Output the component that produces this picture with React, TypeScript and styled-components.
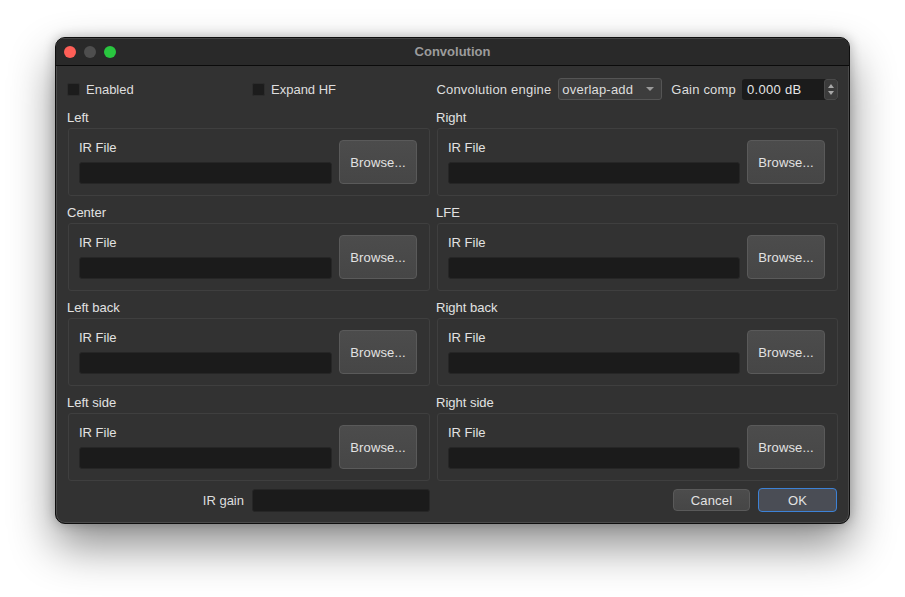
import React from "react";
import styled, { createGlobalStyle } from "styled-components";

const GlobalStyle = createGlobalStyle`
  html, body {
    margin: 0;
    padding: 0;
    background: #ffffff;
  }
  body {
    font-family: "Liberation Sans", Arial, sans-serif;
    font-size: 13px;
  }
`;

const channels = [
  ["Left", "Right"],
  ["Center", "LFE"],
  ["Left back", "Right back"],
  ["Left side", "Right side"],
];

const Stage = styled.div`
  width: 905px;
  height: 597px;
  box-sizing: border-box;
  padding: 37px 0 0 55px;
  overflow: hidden;
  background: #ffffff;
`;

const Window = styled.div`
  width: 795px;
  box-sizing: border-box;
  border: 1px solid #0e0e0e;
  border-radius: 10px;
  background: #323232;
  overflow: hidden;
  box-shadow: inset 0 0 0 1px rgba(255, 255, 255, 0.12),
    0 22px 45px rgba(0, 0, 0, 0.45), 0 0 12px rgba(0, 0, 0, 0.25);
  display: flex;
  flex-direction: column;
  color: #dedede;
`;

const TitleBar = styled.div`
  height: 27px;
  border-bottom: 1px solid #0b0b0b;
  background: #292929;
  display: grid;
  grid-template-columns: 1fr auto 1fr;
  align-items: center;
  box-shadow: inset 0 1px 0 rgba(255, 255, 255, 0.12);
`;

const Lights = styled.div`
  display: flex;
  gap: 8px;
  padding-left: 8px;
`;

const Light = styled.span<{ $c: string }>`
  width: 12px;
  height: 12px;
  border-radius: 50%;
  background: ${(p) => p.$c};
`;

const Title = styled.div`
  font-weight: bold;
  font-size: 13px;
  color: #9c9c9c;
`;

const Body = styled.div`
  padding: 12px 11px 11px 12px;
  display: flex;
  flex-direction: column;
`;

const Header = styled.div`
  height: 22px;
  display: flex;
  align-items: center;
  justify-content: space-between;
  margin-left: -1px;
`;

const CheckGroup = styled.div`
  display: flex;
  align-items: center;
`;

const CheckItem = styled.label<{ $w?: number }>`
  ${(p) => (p.$w ? `width: ${p.$w}px;` : "")}
  display: flex;
  align-items: center;
  gap: 6px;
  color: #dedede;
`;

const CheckBox = styled.span`
  width: 13px;
  height: 13px;
  box-sizing: border-box;
  border-radius: 2px;
  background: #1c1c1c;
  border: 1px solid #2c2c2c;
`;

const Controls = styled.div`
  display: flex;
  align-items: center;
`;

const Label = styled.span<{ $gap?: number; $spacing?: number }>`
  margin-right: ${(p) => p.$gap ?? 6}px;
  white-space: nowrap;
  color: #dedede;
  letter-spacing: ${(p) => p.$spacing ?? 0}px;
`;

const Combo = styled.div`
  width: 104px;
  height: 22px;
  box-sizing: border-box;
  border: 1px solid #555555;
  border-radius: 3px;
  background: #3d3d3d;
  display: flex;
  align-items: center;
  justify-content: space-between;
  padding: 0 7px 0 3px;
  margin-right: 9px;
  color: #dedede;
  letter-spacing: 0.2px;
`;

const Arrow = styled.span`
  width: 0;
  height: 0;
  border-left: 4px solid transparent;
  border-right: 4px solid transparent;
  border-top: 4px solid #9a9a9a;
`;

const Spin = styled.div`
  width: 96px;
  height: 21px;
  box-sizing: border-box;
  border-radius: 3px;
  background: #1b1b1b;
  display: flex;
  align-items: stretch;
  overflow: hidden;
`;

const SpinText = styled.span`
  flex: 1;
  padding-left: 5px;
  display: flex;
  align-items: center;
  color: #e6e6e6;
  letter-spacing: 0.3px;
`;

const Stepper = styled.div`
  width: 14px;
  background: #3b3b3b;
  border: 1px solid #4a4a4a;
  border-radius: 3px;
  box-sizing: border-box;
  display: flex;
  flex-direction: column;
  align-items: center;
  justify-content: center;
  gap: 3px;
`;

const Tri = styled.span<{ $up?: boolean }>`
  width: 0;
  height: 0;
  border-left: 3.5px solid transparent;
  border-right: 3.5px solid transparent;
  ${(p) =>
    p.$up ? "border-bottom: 4px solid #a8a8a8;" : "border-top: 4px solid #a8a8a8;"}
`;

const Sections = styled.div`
  margin-top: 9px;
  display: grid;
  grid-template-columns: 362px 401px;
  column-gap: 7px;
  row-gap: 8px;
`;

const Section = styled.div`
  display: flex;
  flex-direction: column;
`;

const SectionLabel = styled.div`
  height: 16px;
  line-height: 16px;
  margin-top: 1px;
  margin-bottom: 2px;
  margin-left: -1px;
  color: #e2e2e2;
`;

const GroupBox = styled.div`
  height: 68px;
  box-sizing: border-box;
  border: 1px solid #3f3f3f;
  border-radius: 3px;
  padding: 11px 12px 11px 10px;
  display: flex;
  gap: 7px;
`;

const FileCol = styled.div`
  flex: 1;
  display: flex;
  flex-direction: column;
  justify-content: space-between;
`;

const FileLabel = styled.div`
  line-height: 16px;
  color: #e2e2e2;
`;

const Field = styled.div<{ $w?: number; $h?: number }>`
  height: ${(p) => p.$h ?? 22}px;
  ${(p) => (p.$w ? `width: ${p.$w}px;` : "")}
  box-sizing: border-box;
  border-radius: 3px;
  background: #1b1b1b;
  border: 1px solid #262626;
`;

const Button = styled.button<{ $w: number; $h: number; $default?: boolean }>`
  width: ${(p) => p.$w}px;
  height: ${(p) => p.$h}px;
  box-sizing: border-box;
  border-radius: 4px;
  border: 1px solid ${(p) => (p.$default ? "#3d82d6" : "#5a5a5a")};
  background: ${(p) =>
    p.$default ? "#4a4d55" : "linear-gradient(#4c4c4c, #464646)"};
  color: #e2e2e2;
  font-family: "Liberation Sans", Arial, sans-serif;
  font-size: 13px;
  letter-spacing: 0.15px;
  padding: 0;
`;

const Footer = styled.div`
  margin-top: 7px;
  display: grid;
  grid-template-columns: 362px 401px;
  column-gap: 7px;
  height: 24px;
`;

const FooterLeft = styled.div`
  display: flex;
  align-items: center;
  justify-content: flex-end;
`;

const FooterRight = styled.div`
  display: flex;
  align-items: center;
  justify-content: flex-end;
  gap: 8px;
  padding-right: 1px;
`;

const Channel = ({ name }: { name: string }) => (
  <Section>
    <SectionLabel>{name}</SectionLabel>
    <GroupBox>
      <FileCol>
        <FileLabel>IR File</FileLabel>
        <Field />
      </FileCol>
      <Button $w={78} $h={44}>
        Browse...
      </Button>
    </GroupBox>
  </Section>
);

export default function App() {
  return (
    <Stage>
      <GlobalStyle />
      <Window>
        <TitleBar>
          <Lights>
            <Light $c="#fe5f57" />
            <Light $c="#4e4e4e" />
            <Light $c="#29c63f" />
          </Lights>
          <Title>Convolution</Title>
          <div />
        </TitleBar>
        <Body>
          <Header>
            <CheckGroup>
              <CheckItem $w={185}>
                <CheckBox />
                Enabled
              </CheckItem>
              <CheckItem>
                <CheckBox />
                Expand HF
              </CheckItem>
            </CheckGroup>
            <Controls>
              <Label $gap={7} $spacing={0.2}>
                Convolution engine
              </Label>
              <Combo>
                overlap-add
                <Arrow />
              </Combo>
              <Label $gap={6} $spacing={0.2}>
                Gain comp
              </Label>
              <Spin>
                <SpinText>0.000 dB</SpinText>
                <Stepper>
                  <Tri $up />
                  <Tri />
                </Stepper>
              </Spin>
            </Controls>
          </Header>
          <Sections>
            {channels.flat().map((c) => (
              <Channel key={c} name={c} />
            ))}
          </Sections>
          <Footer>
            <FooterLeft>
              <Label $gap={8}>IR gain</Label>
              <Field $w={178} $h={23} />
            </FooterLeft>
            <FooterRight>
              <Button $w={77} $h={22}>
                Cancel
              </Button>
              <Button $w={79} $h={24} $default>
                OK
              </Button>
            </FooterRight>
          </Footer>
        </Body>
      </Window>
    </Stage>
  );
}
